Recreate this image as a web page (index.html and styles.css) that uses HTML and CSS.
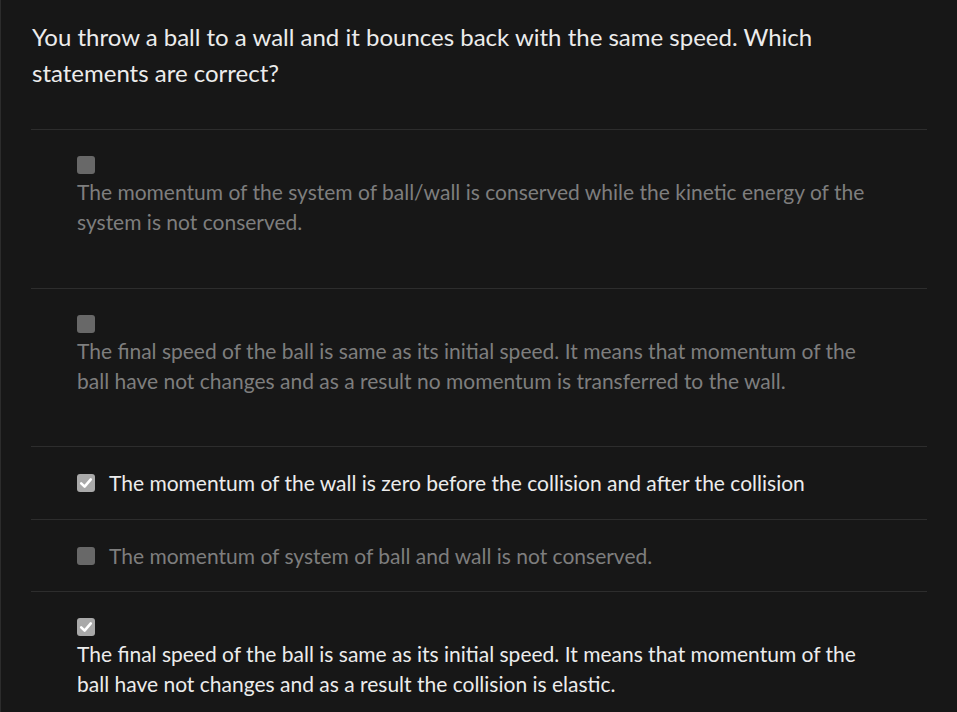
FILE: index.html
```html
<!DOCTYPE html>
<html>
<head>
<meta charset="utf-8">
<link rel="stylesheet" href="styles.css">
</head>
<body>
<div class="page">
  <div class="question">You throw a ball to a wall and it bounces back with the same speed. Which statements are correct?</div>
  <ul class="options">
    <li class="option stacked">
      <span class="box"></span>
      <p class="text dim">The momentum of the system of ball/wall is conserved while the kinetic energy of the system is not conserved.</p>
    </li>
    <li class="option stacked">
      <span class="box"></span>
      <p class="text dim">The final speed of the ball is same as its initial speed. It means that momentum of the ball have not changes and as a result no momentum is transferred to the wall.</p>
    </li>
    <li class="option inline">
      <span class="box checked"><svg viewBox="0 0 18 18" width="18" height="18"><path d="M4.2 9.4 L7.6 12.6 L13.8 5.4" fill="none" stroke="#fff" stroke-width="2.6" stroke-linecap="round" stroke-linejoin="round"/></svg></span>
      <span class="text bright">The momentum of the wall is zero before the collision and after the collision</span>
    </li>
    <li class="option inline">
      <span class="box"></span>
      <span class="text dim">The momentum of system of ball and wall is not conserved.</span>
    </li>
    <li class="option stacked">
      <span class="box checked"><svg viewBox="0 0 18 18" width="18" height="18"><path d="M4.2 9.4 L7.6 12.6 L13.8 5.4" fill="none" stroke="#fff" stroke-width="2.6" stroke-linecap="round" stroke-linejoin="round"/></svg></span>
      <p class="text bright">The final speed of the ball is same as its initial speed. It means that momentum of the ball have not changes and as a result the collision is elastic.</p>
    </li>
  </ul>
</div>
</body>
</html>
```

FILE: styles.css
```css
html, body {
  margin: 0;
  padding: 0;
  background: #171717;
  height: 100%;
  overflow: hidden;
}
body {
  font-family: "Lato", "Liberation Sans", sans-serif;
  border-left: 1px solid #2c2c2c;
  box-sizing: border-box;
}
.page {
  padding: 19px 30px 0 30px;
}
.question {
  color: #ececec;
  font-size: 24px;
  line-height: 36px;
  padding: 0 40px 38px 1px;
  border-bottom: 1px solid #2d2d2d;
}
.options {
  list-style: none;
  margin: 0;
  padding: 0;
}
.option {
  border-bottom: 1px solid #2d2d2d;
  padding-left: 46px;
}
.option.stacked {
  padding-top: 23px;
  padding-bottom: 19.5px;
}
.option.inline {
  padding-top: 21px;
  padding-bottom: 20.5px;
  display: flex;
  align-items: center;
  gap: 14px;
  height: 30px;
}
.box {
  display: block;
  width: 18px;
  height: 18px;
  border-radius: 3px;
  background: #686868;
  flex: none;
}
.option.stacked .box {
  margin: 3px 0 3px 0;
}
.box.checked {
  background: #a9a9a9;
}
.box svg {
  display: block;
}
.text {
  font-size: 21px;
  line-height: 30px;
  margin: 0;
}
p.text {
  margin: 0 0 31px 0;
  padding-right: 40px;
}
.dim {
  color: #7e7e7e;
}
.bright {
  color: #ececec;
}
```
